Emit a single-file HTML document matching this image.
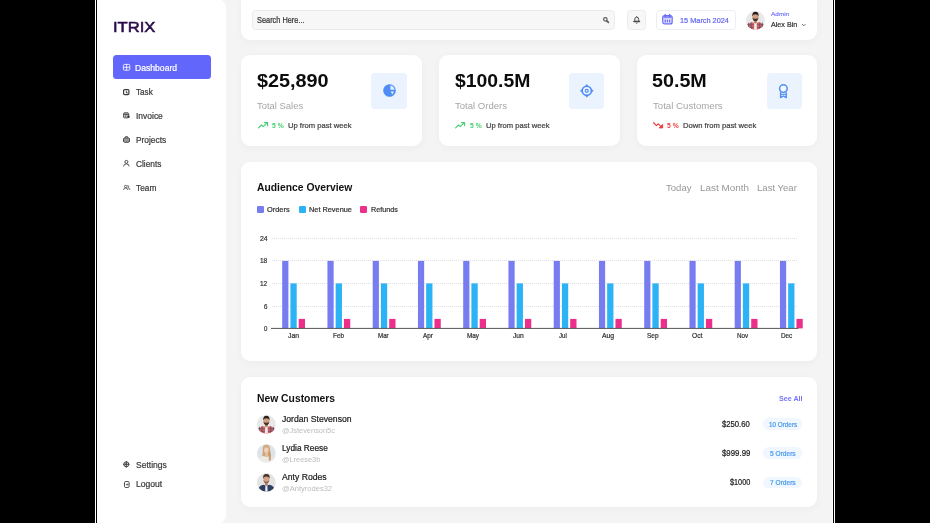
<!DOCTYPE html>
<html>
<head>
<meta charset="utf-8">
<title>ITRIX Dashboard</title>
<style>
*{box-sizing:border-box;margin:0;padding:0}
html,body{width:930px;height:523px;overflow:hidden;background:#000}
body{font-family:"Liberation Sans",sans-serif;position:relative;color:#222}
.abs{position:absolute}
#lw{position:absolute;left:95px;top:0;width:1px;height:523px;background:#fff}
#rw{position:absolute;left:834px;top:0;width:1px;height:523px;background:#fff}
#frame{position:absolute;left:97px;top:0;width:736px;height:523px;background:#f4f4f4;overflow:hidden}
#in{position:absolute;left:-97px;top:0;width:930px;height:523px}
#side{position:absolute;left:97px;top:-0.6px;width:129px;height:524.2px;background:#fff;border-radius:0 9px 9px 0}
.card{position:absolute;background:#fff;border-radius:9px;box-shadow:0 2px 8px rgba(0,0,0,0.035)}
.t{position:absolute;white-space:nowrap;line-height:1;transform-origin:0 0}
svg{position:absolute;overflow:visible}
</style>
</head>
<body>
<div id="lw"></div><div id="rw"></div>
<div id="frame"><div id="in">
<div id="side"></div>
<div class="abs" style="left:831.6px;top:0;width:1.4px;height:523px;background:#fff"></div>
<div class="card" style="left:241.3px;top:-10px;width:575.8px;height:50.4px"></div>
<div class="card" style="left:241.4px;top:55.1px;width:180.7px;height:91.2px"></div>
<div class="card" style="left:439px;top:55.1px;width:180.7px;height:91.2px"></div>
<div class="card" style="left:636.6px;top:55.1px;width:180.7px;height:91.2px"></div>
<div class="card" style="left:241.3px;top:161.9px;width:575.9px;height:199.3px"></div>
<div class="card" style="left:241.3px;top:376.6px;width:575.9px;height:130.3px"></div>
<div class="abs" style="left:113px;top:55.4px;width:97.8px;height:24.1px;background:#6366fb;border-radius:3.5px;"></div>
<svg style="left:123px;top:64.4px" width="7.2" height="6.6" viewBox="0 0 7.2 6.6" preserveAspectRatio="none"><rect x="0.4" y="0.4" width="6.4" height="5.8" rx="1" fill="none" stroke="#fff" stroke-width="0.8"/><path d="M0.4 3.3H6.8M3.6 0.4V6.2" stroke="#fff" stroke-width="0.8" fill="none"/></svg>
<svg style="left:123.4px;top:88.5px" width="6.6" height="6.4" viewBox="0 0 6.6 6.4" preserveAspectRatio="none"><rect x="0.6" y="0.6" width="5.3" height="5.1" rx="1.1" fill="none" stroke="#3a3a3a" stroke-width="1.2"/><path d="M3.4 1.9V3.9H4.9" stroke="#3a3a3a" stroke-width="0.9" fill="none"/></svg>
<svg style="left:123.1px;top:112.1px" width="6.8" height="6.6" viewBox="0 0 6.8 6.6" preserveAspectRatio="none"><rect x="0.5" y="0.9" width="5.2" height="5.0" rx="1" fill="#bdbdbd" stroke="#555" stroke-width="0.9"/><path d="M0.5 2.5H5.7M2 0.2V1.3M4.2 0.2V1.3M2.4 3.6V5" stroke="#3a3a3a" stroke-width="0.7" fill="none"/><circle cx="5.5" cy="4.8" r="1.2" fill="#3a3a3a"/></svg>
<svg style="left:123px;top:136.3px" width="7" height="6.8" viewBox="0 0 7 6.8" preserveAspectRatio="none"><rect x="0.5" y="1.9" width="6" height="4.4" rx="1.2" fill="#9a9a9a" stroke="#3a3a3a" stroke-width="0.9"/><path d="M2.3 1.9V1.1Q2.3 0.5 2.9 0.5H4.1Q4.7 0.5 4.7 1.1V1.9" stroke="#3a3a3a" stroke-width="0.8" fill="none"/></svg>
<svg style="left:123.2px;top:160.2px" width="6.8" height="6.8" viewBox="0 0 6.8 6.8" preserveAspectRatio="none"><circle cx="3.4" cy="1.9" r="1.5" fill="none" stroke="#3a3a3a" stroke-width="0.9"/><path d="M0.6 6.4Q0.8 3.9 3.4 3.9Q6 3.9 6.2 6.4" stroke="#3a3a3a" stroke-width="0.9" fill="none"/></svg>
<svg style="left:122.9px;top:184.5px" width="7.4" height="5.5" viewBox="0 0 7.6 6.4" preserveAspectRatio="none"><circle cx="2.7" cy="1.7" r="1.3" fill="none" stroke="#3a3a3a" stroke-width="0.8"/><path d="M0.4 5.8Q0.5 3.6 2.7 3.6Q4.9 3.6 5 5.8" stroke="#3a3a3a" stroke-width="0.8" fill="none"/><path d="M4.5 0.5Q5.9 0.6 5.9 1.8Q5.9 2.9 4.9 3.1Q7 3.4 7.1 5.8" stroke="#3a3a3a" stroke-width="0.8" fill="none"/></svg>
<svg style="left:123.4px;top:461.2px" width="6.6" height="6.6" viewBox="0 0 6.6 6.6" preserveAspectRatio="none"><circle cx="3.3" cy="3.3" r="2.5" fill="none" stroke="#3a3a3a" stroke-width="1"/><circle cx="3.3" cy="3.3" r="0.9" fill="none" stroke="#3a3a3a" stroke-width="0.7"/><path d="M3.3 0V6.6M0 3.3H6.6" stroke="#3a3a3a" stroke-width="0.8"/></svg>
<svg style="left:123.7px;top:480.9px" width="5.6" height="7" viewBox="0 0 5.6 7" preserveAspectRatio="none"><rect x="0.5" y="0.5" width="4.6" height="6" rx="1.2" fill="none" stroke="#3a3a3a" stroke-width="0.9"/><path d="M1.8 3.5H4.2M3.2 2.5L4.2 3.5L3.2 4.5" stroke="#3a3a3a" stroke-width="0.7" fill="none"/></svg>
<div class="abs" style="left:252px;top:10.2px;width:362.7px;height:19.4px;background:#f7f7f7;border-radius:3.5px;border:1px solid #e9ecee;"></div>
<svg style="left:602.8px;top:16.7px" width="6.2" height="6.2" viewBox="0 0 6.2 6.2" preserveAspectRatio="none"><circle cx="2.35" cy="2.35" r="1.75" fill="none" stroke="#5a5a5a" stroke-width="1.15"/><path d="M3.8 3.8L5.4 5.4" stroke="#5a5a5a" stroke-width="1.7" stroke-linecap="round"/></svg>
<div class="abs" style="left:626.6px;top:10.1px;width:19.4px;height:19.5px;background:#f7f7f7;border-radius:3.5px;border:1px solid #e9ecee;"></div>
<svg style="left:632.9px;top:15.8px" width="7.4" height="8.2" viewBox="0 0 7.4 8.2" preserveAspectRatio="none"><path d="M1.5 5.4Q1.7 4.9 1.7 3.6Q1.7 1.1 3.7 1.1Q5.7 1.1 5.7 3.6Q5.7 4.9 5.9 5.4Z" fill="#efefef" stroke="#4a4a4a" stroke-width="1" stroke-linejoin="round"/><path d="M0.9 5.6H6.5" stroke="#4a4a4a" stroke-width="1.5" stroke-linecap="round"/><path d="M2.5 6.7Q3.7 8.4 4.9 6.7Z" fill="#4a4a4a"/><path d="M3.7 0.2V1" stroke="#4a4a4a" stroke-width="0.9"/></svg>
<div class="abs" style="left:656.2px;top:10.3px;width:79.6px;height:19.4px;background:#ffffff;border-radius:3.5px;border:1px solid #ebedf6;"></div>
<svg style="left:662.1px;top:14.4px" width="10.9" height="10.7" viewBox="0 0 10.9 10.7" preserveAspectRatio="none"><rect x="0.75" y="1.6" width="9.4" height="8.4" rx="2" fill="#f1f1ff" stroke="#6669f7" stroke-width="1.25"/><rect x="1.2" y="2" width="8.5" height="2.3" rx="1" fill="#8588f9"/><path d="M3.2 0.4V2.4M7.7 0.4V2.4" stroke="#6669f7" stroke-width="1.2" stroke-linecap="round"/><path d="M2.5 5.6H3.9V8.4H2.5ZM4.75 5.6H6.15V8.4H4.75ZM7 5.6H8.4V8.4H7Z" fill="#6d70f7"/></svg>
<svg style="left:745.60px;top:10.60px" width="18.9" height="18.9" viewBox="0 0 20 20"><defs><clipPath id="ch"><circle cx="10" cy="10" r="10"/></clipPath></defs><g clip-path="url(#ch)"><rect width="20" height="20" fill="#e8e8e8"/><path d="M0 20Q0.6 12.9 6.6 11.9L10 13L13.4 11.9Q19.4 12.9 20 20Z" fill="#dc6262"/>
<path d="M2.6 12.5V20M5.4 11.8V20M14.6 11.8V20M17.4 12.5V20" stroke="#4f4a62" stroke-width="1.1" opacity="0.7"/>
<path d="M0 14.6H20M0 17.4H20" stroke="#4f4a62" stroke-width="1" opacity="0.6"/>
<path d="M8.7 12.2L10 13.4L11.3 12.2L11.5 20H8.5Z" fill="#f0eeee"/>
<rect x="8.5" y="8.6" width="3" height="4" fill="#b88768"/>
<ellipse cx="10" cy="6.3" rx="3.1" ry="3.9" fill="#cf9f80"/>
<path d="M6.7 5.8Q6.1 0.8 10 0.8Q13.9 0.8 13.3 5.8Q12.8 3.6 10 3.5Q7.2 3.6 6.7 5.8Z" fill="#2b1d19"/>
<path d="M6.9 6.6Q7.1 10.6 10 10.8Q12.9 10.6 13.1 6.6Q12.6 8.4 10 8.2Q7.4 8.4 6.9 6.6Z" fill="#4a3128"/></g></svg>
<svg style="left:801.6px;top:23.9px" width="3.6" height="2.4" viewBox="0 0 3.6 2.4" preserveAspectRatio="none"><path d="M0.4 0.4L1.8 1.8L3.2 0.4" fill="none" stroke="#555" stroke-width="0.9" stroke-linecap="round" stroke-linejoin="round"/></svg>
<div class="abs" style="left:371.3px;top:72.8px;width:35.6px;height:35.8px;background:#ebf3ff;border-radius:4px;"></div>
<svg style="left:382.55px;top:84.39999999999999px" width="13" height="13" viewBox="0 0 13 13" preserveAspectRatio="none"><circle cx="6.5" cy="6.5" r="6.3" fill="#4d8df5"/><path d="M7.4 1.5V5.7H11.6A5.2 5.2 0 0 0 7.4 1.5Z" fill="#e3edff"/><path d="M7.7 7.6H11L9.3 10.6Z" fill="#e9f1ff"/></svg>
<svg style="left:257.6px;top:121.7px" width="10.2" height="6.6" viewBox="0 0 10.6 6.8" preserveAspectRatio="none"><path d="M0.6 6L3.6 3.1L5.4 4.8L9.3 1.2" fill="none" stroke="#43cf70" stroke-width="1.15" stroke-linecap="round" stroke-linejoin="round"/><path d="M6.8 0.7H10V3.9" fill="none" stroke="#43cf70" stroke-width="1.15" stroke-linecap="round" stroke-linejoin="round"/></svg>
<div class="abs" style="left:568.9px;top:72.8px;width:35.6px;height:35.8px;background:#ebf3ff;border-radius:4px;"></div>
<svg style="left:579.6px;top:83.69999999999999px" width="13.6" height="13.6" viewBox="0 0 13.6 13.6" preserveAspectRatio="none"><circle cx="6.8" cy="6.8" r="4.6" fill="none" stroke="#4d8df5" stroke-width="1.6"/><circle cx="6.8" cy="6.8" r="1.5" fill="none" stroke="#4d8df5" stroke-width="1.2"/><path d="M5.7 1.8L6.8 0.3L7.9 1.8ZM5.7 11.8L6.8 13.3L7.9 11.8ZM1.8 5.7L0.3 6.8L1.8 7.9ZM11.8 5.7L13.3 6.8L11.8 7.9Z" fill="#4d8df5" stroke="#4d8df5" stroke-width="0.5" stroke-linejoin="round"/></svg>
<svg style="left:455.20000000000005px;top:121.7px" width="10.2" height="6.6" viewBox="0 0 10.6 6.8" preserveAspectRatio="none"><path d="M0.6 6L3.6 3.1L5.4 4.8L9.3 1.2" fill="none" stroke="#43cf70" stroke-width="1.15" stroke-linecap="round" stroke-linejoin="round"/><path d="M6.8 0.7H10V3.9" fill="none" stroke="#43cf70" stroke-width="1.15" stroke-linecap="round" stroke-linejoin="round"/></svg>
<div class="abs" style="left:766.5px;top:72.8px;width:35.6px;height:35.8px;background:#ebf3ff;border-radius:4px;"></div>
<svg style="left:778.15px;top:83.69999999999999px" width="10.8" height="14.4" viewBox="0 0 10.8 14.4" preserveAspectRatio="none"><circle cx="5.4" cy="4.6" r="3.8" fill="#f3f8ff" stroke="#4d8df5" stroke-width="1.5"/><path d="M2.6 8.2V13.6L5.4 12L8.2 13.6V8.2" fill="none" stroke="#4d8df5" stroke-width="1.4" stroke-linejoin="round"/><path d="M2.6 10.4H8.2" stroke="#4d8df5" stroke-width="1"/></svg>
<svg style="left:652.8px;top:121.7px" width="10.2" height="6.6" viewBox="0 0 10.6 6.8" preserveAspectRatio="none"><path d="M0.6 0.8L3.6 3.7L5.4 2L9.3 5.6" fill="none" stroke="#ee3b3b" stroke-width="1.2" stroke-linecap="round" stroke-linejoin="round"/><path d="M6.8 6.1H10V2.9Z" fill="#ee3b3b" stroke="#ee3b3b" stroke-width="1" stroke-linecap="round" stroke-linejoin="round"/></svg>
<div class="abs" style="left:256.9px;top:205.8px;width:7.2px;height:7px;background:#777cf0;border-radius:1.2px;"></div>
<div class="abs" style="left:298.7px;top:205.8px;width:7.2px;height:7px;background:#2cb3f5;border-radius:1.2px;"></div>
<div class="abs" style="left:360.1px;top:205.8px;width:7.2px;height:7px;background:#ee2e8b;border-radius:1.2px;"></div>
<svg style="left:0;top:0" width="930" height="523" viewBox="0 0 930 523"><path d="M272 238.5H798" stroke="#e0e0e0" stroke-width="1" stroke-dasharray="1 1" shape-rendering="crispEdges"/><path d="M272 260.5H798" stroke="#e0e0e0" stroke-width="1" stroke-dasharray="1 1" shape-rendering="crispEdges"/><path d="M272 283.5H798" stroke="#e0e0e0" stroke-width="1" stroke-dasharray="1 1" shape-rendering="crispEdges"/><path d="M272 306.5H798" stroke="#e0e0e0" stroke-width="1" stroke-dasharray="1 1" shape-rendering="crispEdges"/><rect x="282.20" y="260.9" width="6.2" height="67.5" fill="#777cf0"/><rect x="290.40" y="283.4" width="6.3" height="45" fill="#2cb3f5"/><rect x="298.70" y="318.9" width="6.3" height="9.5" fill="#ee2e8b"/><rect x="327.45" y="260.9" width="6.2" height="67.5" fill="#777cf0"/><rect x="335.65" y="283.4" width="6.3" height="45" fill="#2cb3f5"/><rect x="343.95" y="318.9" width="6.3" height="9.5" fill="#ee2e8b"/><rect x="372.70" y="260.9" width="6.2" height="67.5" fill="#777cf0"/><rect x="380.90" y="283.4" width="6.3" height="45" fill="#2cb3f5"/><rect x="389.20" y="318.9" width="6.3" height="9.5" fill="#ee2e8b"/><rect x="417.95" y="260.9" width="6.2" height="67.5" fill="#777cf0"/><rect x="426.15" y="283.4" width="6.3" height="45" fill="#2cb3f5"/><rect x="434.45" y="318.9" width="6.3" height="9.5" fill="#ee2e8b"/><rect x="463.20" y="260.9" width="6.2" height="67.5" fill="#777cf0"/><rect x="471.40" y="283.4" width="6.3" height="45" fill="#2cb3f5"/><rect x="479.70" y="318.9" width="6.3" height="9.5" fill="#ee2e8b"/><rect x="508.45" y="260.9" width="6.2" height="67.5" fill="#777cf0"/><rect x="516.65" y="283.4" width="6.3" height="45" fill="#2cb3f5"/><rect x="524.95" y="318.9" width="6.3" height="9.5" fill="#ee2e8b"/><rect x="553.70" y="260.9" width="6.2" height="67.5" fill="#777cf0"/><rect x="561.90" y="283.4" width="6.3" height="45" fill="#2cb3f5"/><rect x="570.20" y="318.9" width="6.3" height="9.5" fill="#ee2e8b"/><rect x="598.95" y="260.9" width="6.2" height="67.5" fill="#777cf0"/><rect x="607.15" y="283.4" width="6.3" height="45" fill="#2cb3f5"/><rect x="615.45" y="318.9" width="6.3" height="9.5" fill="#ee2e8b"/><rect x="644.20" y="260.9" width="6.2" height="67.5" fill="#777cf0"/><rect x="652.40" y="283.4" width="6.3" height="45" fill="#2cb3f5"/><rect x="660.70" y="318.9" width="6.3" height="9.5" fill="#ee2e8b"/><rect x="689.45" y="260.9" width="6.2" height="67.5" fill="#777cf0"/><rect x="697.65" y="283.4" width="6.3" height="45" fill="#2cb3f5"/><rect x="705.95" y="318.9" width="6.3" height="9.5" fill="#ee2e8b"/><rect x="734.70" y="260.9" width="6.2" height="67.5" fill="#777cf0"/><rect x="742.90" y="283.4" width="6.3" height="45" fill="#2cb3f5"/><rect x="751.20" y="318.9" width="6.3" height="9.5" fill="#ee2e8b"/><rect x="779.95" y="260.9" width="6.2" height="67.5" fill="#777cf0"/><rect x="788.15" y="283.4" width="6.3" height="45" fill="#2cb3f5"/><rect x="796.45" y="318.9" width="6.3" height="9.5" fill="#ee2e8b"/><path d="M271 328.4H798.3" stroke="#555" stroke-width="1"/></svg>
<svg style="left:257.05px;top:415.00px" width="18.8" height="18.8" viewBox="0 0 20 20"><defs><clipPath id="cr0"><circle cx="10" cy="10" r="10"/></clipPath></defs><g clip-path="url(#cr0)"><rect width="20" height="20" fill="#e8e8e8"/><path d="M0 20Q0.6 12.9 6.6 11.9L10 13L13.4 11.9Q19.4 12.9 20 20Z" fill="#dc6262"/>
<path d="M2.6 12.5V20M5.4 11.8V20M14.6 11.8V20M17.4 12.5V20" stroke="#4f4a62" stroke-width="1.1" opacity="0.7"/>
<path d="M0 14.6H20M0 17.4H20" stroke="#4f4a62" stroke-width="1" opacity="0.6"/>
<path d="M8.7 12.2L10 13.4L11.3 12.2L11.5 20H8.5Z" fill="#f0eeee"/>
<rect x="8.5" y="8.6" width="3" height="4" fill="#b88768"/>
<ellipse cx="10" cy="6.3" rx="3.1" ry="3.9" fill="#cf9f80"/>
<path d="M6.7 5.8Q6.1 0.8 10 0.8Q13.9 0.8 13.3 5.8Q12.8 3.6 10 3.5Q7.2 3.6 6.7 5.8Z" fill="#2b1d19"/>
<path d="M6.9 6.6Q7.1 10.6 10 10.8Q12.9 10.6 13.1 6.6Q12.6 8.4 10 8.2Q7.4 8.4 6.9 6.6Z" fill="#4a3128"/></g></svg>
<div class="abs" style="left:763.2px;top:418.3px;width:38.5px;height:11.6px;background:#f1f7ff;border-radius:5.5px;"></div>
<svg style="left:257.05px;top:444.10px" width="18.8" height="18.8" viewBox="0 0 20 20"><defs><clipPath id="cr1"><circle cx="10" cy="10" r="10"/></clipPath></defs><g clip-path="url(#cr1)"><rect width="20" height="20" fill="#dfe4e8"/><path d="M6.2 7.2Q5.4 0.6 10 0.7Q14.4 0.6 13.9 7.2Q15.2 12 14.6 17.4H5.8Q5.2 12 6.2 7.2Z" fill="#cfa67c"/>
<path d="M1.6 20Q2.2 13.6 7.2 12.9L10 13.8L12.4 13Q13 15 12.6 20Z" fill="#ecebe8"/>
<path d="M14.4 13.2Q17.6 14 18.4 20H14.6Z" fill="#ecebe8"/>
<rect x="8.8" y="9.2" width="2.4" height="4.4" fill="#e6c3a8"/>
<ellipse cx="10" cy="6.2" rx="2.5" ry="3.5" fill="#efd0b8"/>
<path d="M7.3 6Q7.2 1.8 10.2 1.9Q12.9 2 12.8 6Q11.8 3.6 9.8 3.7Q8 3.9 7.3 6Z" fill="#d4ad80"/>
<path d="M12.3 7Q13.6 11 12.4 17.4H14.6Q15.2 11 13.8 7Z" fill="#c79c6e"/></g></svg>
<div class="abs" style="left:763.2px;top:447.40000000000003px;width:38.5px;height:11.6px;background:#f1f7ff;border-radius:5.5px;"></div>
<svg style="left:257.05px;top:473.20px" width="18.8" height="18.8" viewBox="0 0 20 20"><defs><clipPath id="cr2"><circle cx="10" cy="10" r="10"/></clipPath></defs><g clip-path="url(#cr2)"><rect width="20" height="20" fill="#e4e4e4"/><path d="M0.6 20Q1.2 13.6 6.8 12.4L10 13.6L13.2 12.4Q18.8 13.6 19.4 20Z" fill="#2d4063"/>
<path d="M9 13L10 14L11 13L11.3 20H8.7Z" fill="#f3f3f3"/>
<rect x="8.5" y="8.8" width="3" height="4.4" fill="#b98a6e"/>
<ellipse cx="10" cy="6.6" rx="3.1" ry="4" fill="#d3a385"/>
<path d="M6.6 6Q5.8 0.9 10 1Q14.2 0.9 13.4 6Q12.9 3.8 10 3.7Q7.1 3.8 6.6 6Z" fill="#4a3226"/>
<path d="M6.9 7.4Q7.2 11 10 11.1Q12.8 11 13.1 7.4Q12.4 9.3 10 9.2Q7.6 9.3 6.9 7.4Z" fill="#8b6450"/></g></svg>
<div class="abs" style="left:763.2px;top:476.5px;width:38.5px;height:11.6px;background:#f1f7ff;border-radius:5.5px;"></div>
<div id="tx" style="position:absolute;left:0;top:0;width:930px;height:523px;will-change:transform">
<div class="t" style="left:112.59px;top:19px;font-size:15.0px;-webkit-text-stroke:0.55px #2a0a4a;color:#2a0a4a;transform:scaleX(1.1063)">ITRIX</div>
<div class="t" style="left:135.40px;top:64px;font-size:8.8px;-webkit-text-stroke:0.22px #ffffff;color:#ffffff;transform:scaleX(0.9781)">Dashboard</div>
<div class="t" style="left:135.70px;top:88px;font-size:8.7px;-webkit-text-stroke:0.22px #3a3a3a;color:#3a3a3a;transform:scaleX(0.9396)">Task</div>
<div class="t" style="left:135.50px;top:112px;font-size:8.7px;-webkit-text-stroke:0.22px #3a3a3a;color:#3a3a3a;transform:scaleX(0.9749)">Invoice</div>
<div class="t" style="left:135.80px;top:136px;font-size:8.7px;-webkit-text-stroke:0.22px #3a3a3a;color:#3a3a3a;transform:scaleX(0.9614)">Projects</div>
<div class="t" style="left:135.80px;top:160px;font-size:8.7px;-webkit-text-stroke:0.22px #3a3a3a;color:#3a3a3a;transform:scaleX(0.9555)">Clients</div>
<div class="t" style="left:136.00px;top:184px;font-size:8.7px;-webkit-text-stroke:0.22px #3a3a3a;color:#3a3a3a;transform:scaleX(0.9569)">Team</div>
<div class="t" style="left:135.60px;top:461px;font-size:8.7px;-webkit-text-stroke:0.22px #3a3a3a;color:#3a3a3a;transform:scaleX(0.9829)">Settings</div>
<div class="t" style="left:135.60px;top:480px;font-size:8.7px;-webkit-text-stroke:0.22px #3a3a3a;color:#3a3a3a;transform:scaleX(0.9868)">Logout</div>
<div class="t" style="left:256.80px;top:16px;font-size:8.3px;-webkit-text-stroke:0.22px #333333;color:#333333;transform:scaleX(0.8893)">Search Here...</div>
<div class="t" style="left:680.30px;top:17px;font-size:7.9px;-webkit-text-stroke:0.22px #6467f2;color:#6467f2;transform:scaleX(0.9296)">15 March 2024</div>
<div class="t" style="left:771.00px;top:11px;font-size:6.0px;-webkit-text-stroke:0.22px #7d7dff;color:#7d7dff;transform:scaleX(1.0738)">Admin</div>
<div class="t" style="left:771.00px;top:21px;font-size:7.3px;-webkit-text-stroke:0.22px #333333;color:#333333;transform:scaleX(0.9809)">Alex Bin</div>
<div class="t" style="left:256.90px;top:182px;font-size:10.7px;font-weight:bold;color:#111111;transform:scaleX(0.9669)">Audience Overview</div>
<div class="t" style="left:665.50px;top:183px;font-size:9.4px;color:#979797;transform:scaleX(1.0187)">Today</div>
<div class="t" style="left:699.90px;top:183px;font-size:9.4px;color:#979797;transform:scaleX(1.0549)">Last Month</div>
<div class="t" style="left:757.20px;top:183px;font-size:9.4px;color:#979797;transform:scaleX(1.0193)">Last Year</div>
<div class="t" style="left:266.90px;top:206px;font-size:7.2px;-webkit-text-stroke:0.22px #333333;color:#333333;transform:scaleX(1.0281)">Orders</div>
<div class="t" style="left:309.00px;top:206px;font-size:7.2px;-webkit-text-stroke:0.22px #333333;color:#333333;transform:scaleX(1.0225)">Net Revenue</div>
<div class="t" style="left:370.80px;top:206px;font-size:7.2px;-webkit-text-stroke:0.22px #333333;color:#333333;transform:scaleX(1.0009)">Refunds</div>
<div class="t" style="left:257.10px;top:394px;font-size:10.4px;font-weight:bold;color:#111111;transform:scaleX(0.9943)">New Customers</div>
<div class="t" style="left:778.50px;top:395px;font-size:7.7px;font-weight:bold;color:#7575fb;transform:scaleX(0.9294)">See All</div>
<div class="t" style="left:257.40px;top:72px;font-size:18.2px;font-weight:bold;color:#0c0c0c;transform:scaleX(1.0895)">$25,890</div>
<div class="t" style="left:257.40px;top:101px;font-size:9.4px;color:#a6a6a6;transform:scaleX(1.0072)">Total Sales</div>
<div class="t" style="left:272.30px;top:122px;font-size:7.8px;font-weight:bold;color:#43cf70;transform:scaleX(0.8665)">5 %</div>
<div class="t" style="left:288.10px;top:122px;font-size:7.3px;-webkit-text-stroke:0.22px #444444;color:#444444;transform:scaleX(1.0428)">Up from past week</div>
<div class="t" style="left:455.00px;top:72px;font-size:18.2px;font-weight:bold;color:#0c0c0c;transform:scaleX(1.0657)">$100.5M</div>
<div class="t" style="left:455.00px;top:101px;font-size:9.4px;color:#a6a6a6;transform:scaleX(1.0181)">Total Orders</div>
<div class="t" style="left:469.90px;top:122px;font-size:7.8px;font-weight:bold;color:#43cf70;transform:scaleX(0.8665)">5 %</div>
<div class="t" style="left:485.70px;top:122px;font-size:7.3px;-webkit-text-stroke:0.22px #444444;color:#444444;transform:scaleX(1.0428)">Up from past week</div>
<div class="t" style="left:652.00px;top:72px;font-size:18.2px;font-weight:bold;color:#0c0c0c;transform:scaleX(1.0830)">50.5M</div>
<div class="t" style="left:652.60px;top:101px;font-size:9.4px;color:#a6a6a6;transform:scaleX(1.0288)">Total Customers</div>
<div class="t" style="left:667.10px;top:122px;font-size:7.8px;font-weight:bold;color:#ee3b3b;transform:scaleX(0.8665)">5 %</div>
<div class="t" style="left:683.30px;top:122px;font-size:7.3px;-webkit-text-stroke:0.22px #444444;color:#444444;transform:scaleX(1.0438)">Down from past week</div>
<div class="t" style="left:259.50px;top:236px;font-size:6.9px;-webkit-text-stroke:0.22px #333333;color:#333333;transform:scaleX(0.9959)">24</div>
<div class="t" style="left:259.90px;top:258px;font-size:6.9px;-webkit-text-stroke:0.22px #333333;color:#333333;transform:scaleX(0.9448)">18</div>
<div class="t" style="left:259.90px;top:281px;font-size:6.9px;-webkit-text-stroke:0.22px #333333;color:#333333;transform:scaleX(0.9448)">12</div>
<div class="t" style="left:263.70px;top:304px;font-size:6.9px;-webkit-text-stroke:0.22px #333333;color:#333333;transform:scaleX(0.9000)">6</div>
<div class="t" style="left:263.80px;top:326px;font-size:6.9px;-webkit-text-stroke:0.22px #333333;color:#333333;transform:scaleX(0.8750)">0</div>
<div class="t" style="left:288.20px;top:333px;font-size:6.8px;-webkit-text-stroke:0.22px #333333;color:#333333;transform:scaleX(1.0019)">Jan</div>
<div class="t" style="left:333.07px;top:333px;font-size:6.8px;-webkit-text-stroke:0.22px #333333;color:#333333;transform:scaleX(0.9387)">Feb</div>
<div class="t" style="left:377.89px;top:333px;font-size:6.8px;-webkit-text-stroke:0.22px #333333;color:#333333;transform:scaleX(0.9082)">Mar</div>
<div class="t" style="left:423.11px;top:333px;font-size:6.8px;-webkit-text-stroke:0.22px #333333;color:#333333;transform:scaleX(0.9369)">Apr</div>
<div class="t" style="left:466.98px;top:333px;font-size:6.8px;-webkit-text-stroke:0.22px #333333;color:#333333;transform:scaleX(0.9374)">May</div>
<div class="t" style="left:512.65px;top:333px;font-size:6.8px;-webkit-text-stroke:0.22px #333333;color:#333333;transform:scaleX(0.9840)">Jun</div>
<div class="t" style="left:558.92px;top:333px;font-size:6.8px;-webkit-text-stroke:0.22px #333333;color:#333333;transform:scaleX(0.8934)">Jul</div>
<div class="t" style="left:601.69px;top:333px;font-size:6.8px;-webkit-text-stroke:0.22px #333333;color:#333333;transform:scaleX(1.0070)">Aug</div>
<div class="t" style="left:646.86px;top:333px;font-size:6.8px;-webkit-text-stroke:0.22px #333333;color:#333333;transform:scaleX(0.9583)">Sep</div>
<div class="t" style="left:692.43px;top:333px;font-size:6.8px;-webkit-text-stroke:0.22px #333333;color:#333333;transform:scaleX(0.9733)">Oct</div>
<div class="t" style="left:736.60px;top:333px;font-size:6.8px;-webkit-text-stroke:0.22px #333333;color:#333333;transform:scaleX(0.9300)">Nov</div>
<div class="t" style="left:781.47px;top:333px;font-size:6.8px;-webkit-text-stroke:0.22px #333333;color:#333333;transform:scaleX(0.9300)">Dec</div>
<div class="t" style="left:282.00px;top:415px;font-size:8.4px;-webkit-text-stroke:0.22px #222222;color:#222222;transform:scaleX(1.0302)">Jordan Stevenson</div>
<div class="t" style="left:282.00px;top:427px;font-size:7.5px;color:#bdbdbd;transform:scaleX(0.9902)">@Jstevenson5c</div>
<div class="t" style="left:722.20px;top:421px;font-size:8.2px;-webkit-text-stroke:0.22px #222222;color:#222222;transform:scaleX(0.9387)">$250.60</div>
<div class="t" style="left:768.60px;top:422px;font-size:6.3px;-webkit-text-stroke:0.22px #4b9bea;color:#4b9bea;transform:scaleX(1.0054)">10 Orders</div>
<div class="t" style="left:282.00px;top:444px;font-size:8.4px;-webkit-text-stroke:0.22px #222222;color:#222222;transform:scaleX(0.9895)">Lydia Reese</div>
<div class="t" style="left:282.00px;top:456px;font-size:7.5px;color:#bdbdbd;transform:scaleX(0.9841)">@Lreese3b</div>
<div class="t" style="left:721.60px;top:450px;font-size:8.2px;-webkit-text-stroke:0.22px #222222;color:#222222;transform:scaleX(0.9587)">$999.99</div>
<div class="t" style="left:769.70px;top:451px;font-size:6.3px;-webkit-text-stroke:0.22px #4b9bea;color:#4b9bea;transform:scaleX(1.0473)">5 Orders</div>
<div class="t" style="left:282.00px;top:473px;font-size:8.4px;-webkit-text-stroke:0.22px #222222;color:#222222;transform:scaleX(1.0300)">Anty Rodes</div>
<div class="t" style="left:282.00px;top:485px;font-size:7.5px;color:#bdbdbd;transform:scaleX(1.0070)">@Antyrodes32</div>
<div class="t" style="left:729.70px;top:479px;font-size:8.2px;-webkit-text-stroke:0.22px #222222;color:#222222;transform:scaleX(0.8917)">$1000</div>
<div class="t" style="left:769.70px;top:480px;font-size:6.3px;-webkit-text-stroke:0.22px #4b9bea;color:#4b9bea;transform:scaleX(1.0473)">7 Orders</div>
</div>
</div></div>
</body>
</html>
